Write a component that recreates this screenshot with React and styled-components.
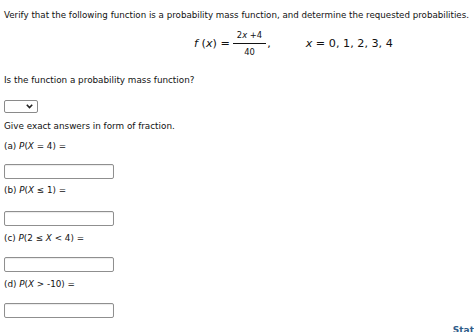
import React from "react";
import styled, { createGlobalStyle } from "styled-components";

const Global = createGlobalStyle`
  html, body { margin: 0; padding: 0; background: #fff; }
  body { font-family: "DejaVu Sans", Verdana, sans-serif; color: #111; overflow: hidden; }
`;

const Page = styled.div`
  width: 474px;
  height: 332px;
  box-sizing: border-box;
  padding: 8px 4px 0 4px;
  overflow: hidden;
  font-size: 8.8px;
  line-height: 13px;
`;

const Intro = styled.p`
  margin: 0;
  font-size: 8.7px;
  line-height: 14px;
  white-space: nowrap;
`;

const Text = styled.p`
  margin: ${(p) => p.$mt || 0}px 0 0 0;
  white-space: nowrap;
`;

const FormulaRow = styled.div`
  display: flex;
  align-items: center;
  margin-top: 5px;
  padding-left: 190px;
  height: 32px;
  font-size: 11.2px;
`;

const Lhs = styled.span`
  white-space: nowrap;
`;

const Fraction = styled.span`
  display: inline-flex;
  flex-direction: column;
  align-items: center;
  margin: 0 1px 0 3px;
  font-size: 8.4px;
  line-height: 10px;
`;

const Num = styled.span`
  padding: 0 4px 3px;
  border-bottom: 1px solid #111;
`;

const Den = styled.span`
  padding-top: 3px;
`;

const Domain = styled.span`
  margin-left: 35px;
  white-space: nowrap;
`;

const Select = styled.div`
  width: 34px;
  height: 13px;
  box-sizing: border-box;
  margin-top: 13.5px;
  border: 1px solid #8a8a8a;
  border-radius: 2px;
  display: flex;
  align-items: center;
  justify-content: flex-end;
  padding-right: 4px;
`;

const Input = styled.div`
  width: 110px;
  height: 15px;
  box-sizing: border-box;
  margin-top: ${(p) => p.$mt || 12.5}px;
  border: 1px solid #8f8f8f;
  border-radius: 2px;
  box-shadow: inset 0 1px 1px rgba(0,0,0,0.08);
`;

const Footer = styled.div`
  display: flex;
  justify-content: flex-end;
  margin-top: 6px;
  margin-right: -4px;
  font-size: 9px;
  line-height: 13px;
  color: #2f5d8a;
  font-weight: bold;
`;

export default function App() {
  return (
    <>
      <Global />
      <Page>
        <Intro>Verify that the following function is a probability mass function, and determine the requested probabilities.</Intro>
        <FormulaRow>
          <Lhs><i>f</i> (<i>x</i>) =</Lhs>
          <Fraction>
            <Num>2<i>x</i> +4</Num>
            <Den>40</Den>
          </Fraction>
          <span>,</span>
          <Domain><i>x</i> = 0, 1, 2, 3, 4</Domain>
        </FormulaRow>
        <Text $mt={14.5}>Is the function a probability mass function?</Text>
        <Select>
          <svg width="7" height="5" viewBox="0 0 7 5">
            <path d="M0.8 0.8 L3.5 3.6 L6.2 0.8" fill="none" stroke="#222" strokeWidth="1.6" />
          </svg>
        </Select>
        <Text $mt={6.5}>Give exact answers in form of fraction.</Text>
        <Text $mt={7}>(a) <i>P</i>(<i>X</i> = 4) =</Text>
        <Input $mt={11.5} />
        <Text $mt={4.5}>(b) <i>P</i>(<i>X</i> ≤ 1) =</Text>
        <Input $mt={14} />
        <Text $mt={6}>(c) <i>P</i>(2 ≤ <i>X</i> &lt; 4) =</Text>
        <Input />
        <Text $mt={5.5}>(d) <i>P</i>(<i>X</i> &gt; -10) =</Text>
        <Input />
        <Footer>Stat</Footer>
      </Page>
    </>
  );
}
